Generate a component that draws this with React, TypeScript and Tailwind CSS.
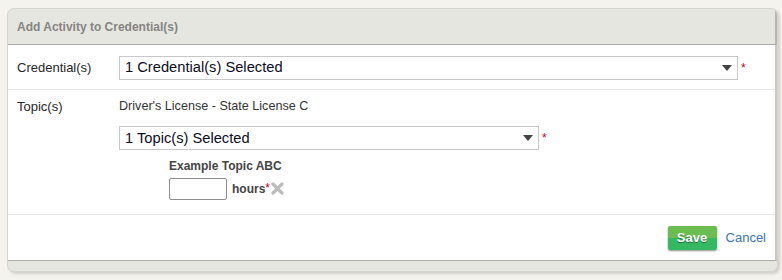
function Caret() {
  return (
    <svg width="10" height="6" viewBox="0 0 10 6" className="shrink-0">
      <path d="M0 0 H10 L5 6 Z" fill="#444" />
    </svg>
  );
}

function Req() {
  return <span className="text-[#c2002b] text-[12px] leading-none">*</span>;
}

export default function App() {
  return (
    <main className="w-[782px] h-[280px] bg-[#f4f3ee] pt-[8px] pl-[7px] font-['Liberation_Sans',Arial,sans-serif]">
      <div className="w-[771px] h-[264px] rounded-[7px] bg-[#e6e6e1] border border-[#d6d6d0] shadow-[2px_2px_3px_rgba(0,0,0,0.15)] flex flex-col overflow-hidden">
        {/* header */}
        <div className="h-[36px] shrink-0 flex items-center pl-[9px] border-b border-[#a9a9a5] border-r-2 border-r-[#b5b5b1]">
          <span className="text-[12px] font-bold text-[#858581]">Add Activity to Credential(s)</span>
        </div>

        {/* body */}
        <div className="bg-white border-r-2 border-[#c8c8c4] border-b border-b-[#aaaaa6] h-[216px] shrink-0 flex flex-col">
          {/* credentials row */}
          <div className="flex items-center h-[45px] pl-[9px] pt-[1px] border-b border-[#e6e6e6]">
            <span className="w-[102px] text-[13px] text-[#262626]">Credential(s)</span>
            <div className="w-[619px] h-[24px] border border-[#c8c8c8] flex items-center justify-between pl-[5px] pr-[5px]">
              <span className="text-[14.7px] text-[#0c0c22]">1 Credential(s) Selected</span>
              <Caret />
            </div>
            <span className="ml-[3px] -mt-[2px]"><Req /></span>
          </div>

          {/* topics row */}
          <div className="flex h-[125px] pl-[9px] pt-[7px] border-b border-[#e6e6e6]">
            <span className="w-[102px] text-[13px] text-[#262626]">Topic(s)</span>
            <div className="flex flex-col">
              <span className="text-[12.6px] text-[#333]">Driver&apos;s License - State License C</span>
              <div className="flex items-center mt-[10px]">
                <div className="w-[420px] h-[24px] border border-[#c8c8c8] flex items-center justify-between pl-[5px] pr-[5px]">
                  <span className="text-[14.7px] text-[#0c0c22]">1 Topic(s) Selected</span>
                  <Caret />
                </div>
                <span className="ml-[3px] -mt-[2px]"><Req /></span>
              </div>
              <div className="pl-[50px] mt-[7px] flex flex-col">
                <span className="text-[12px] font-bold text-[#444]">Example Topic ABC</span>
                <div className="flex items-center mt-[3px]">
                  <div className="w-[58px] h-[22px] border border-[#8f8f8f] rounded-[2px] bg-white" />
                  <span className="ml-[5px] text-[12px] font-bold text-[#444]">hours</span>
                  <span className="-mt-[3px]"><Req /></span>
                  <svg width="13" height="13" viewBox="0 0 13 13" className="ml-[1px]">
                    <path d="M2 2 L11 11 M11 2 L2 11" stroke="#bdbdbd" strokeWidth="3.2" strokeLinecap="round" />
                  </svg>
                </div>
              </div>
            </div>
          </div>

          {/* footer */}
          <div className="flex-1 flex items-center justify-end pr-[9px] gap-[9px]">
            <button className="w-[49px] h-[24px] rounded-[2px] bg-[linear-gradient(#6bbd4f_0%,#6bbd4f_50%,#35b960_50%,#35b960_100%)] shadow-[0_1px_2px_rgba(0,0,0,0.45)] text-white text-[13px] font-bold [text-shadow:0_1px_1px_rgba(0,0,0,0.4)]">
              Save
            </button>
            <span className="text-[13px] text-[#3a73b8]">Cancel</span>
          </div>
        </div>
      </div>
    </main>
  );
}
